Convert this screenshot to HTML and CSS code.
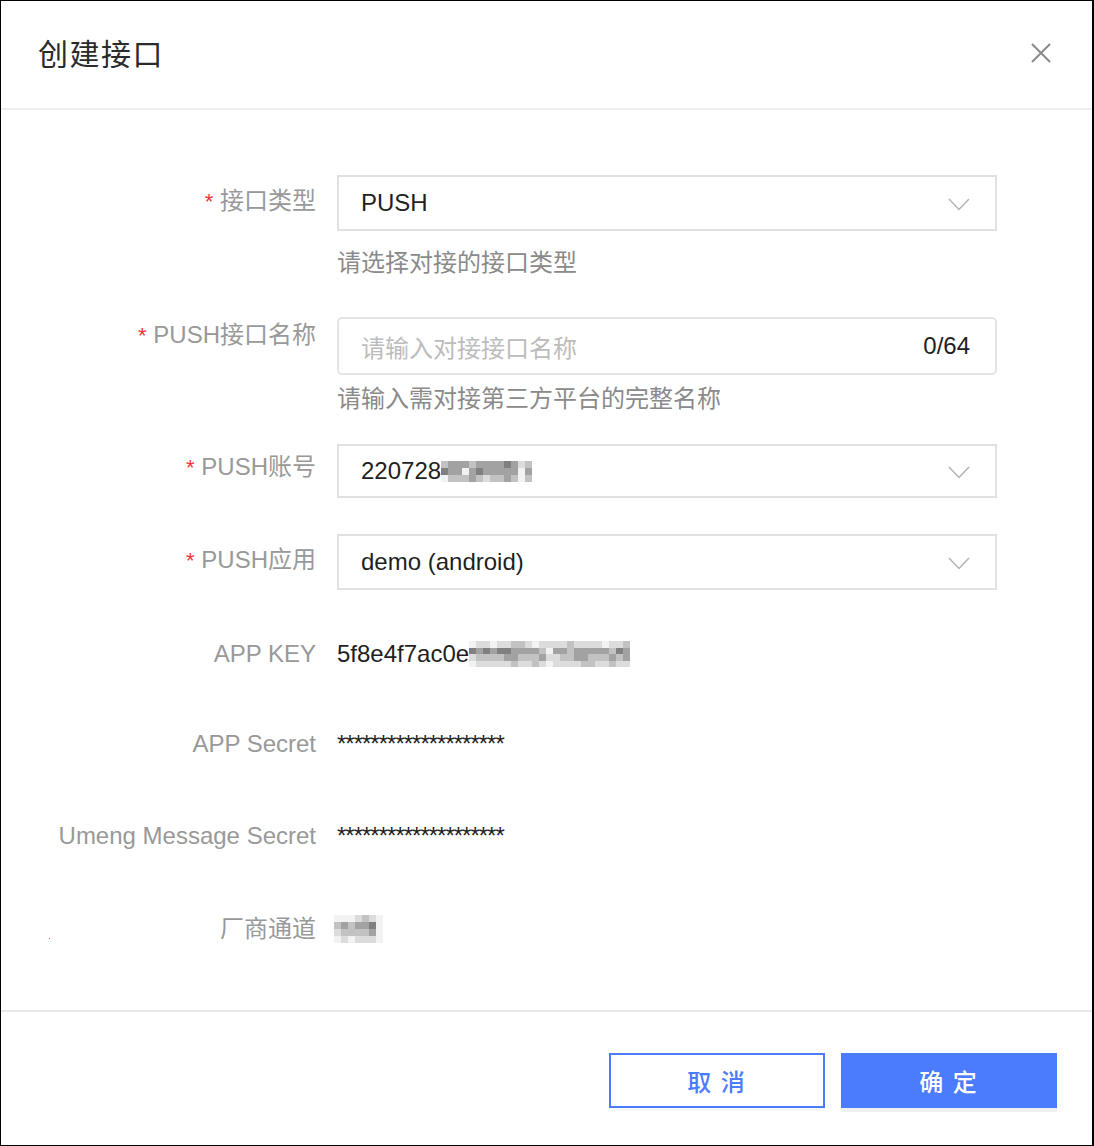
FILE: index.html
```html
<!DOCTYPE html>
<html lang="zh-CN">
<head>
    <meta charset="UTF-8">
    <meta name="viewport" content="width=device-width, initial-scale=1.0">
    <title>创建接口</title>
    <link rel="stylesheet" href="styles.css">
</head>
<body>
    <div class="dialog">
        <!-- Header with title and close button -->
        <div class="dialog-header">
            <h2 class="dialog-title">创建接口</h2>
            <button type="button" class="close-btn" aria-label="关闭">
                <svg width="22" height="22" viewBox="0 0 22 22">
                    <path d="M2 2 L20 20 M20 2 L2 20" stroke="#8a8a8a" stroke-width="2" fill="none"/>
                </svg>
            </button>
        </div>

        <!-- Form body -->
        <div class="dialog-body">
            <form class="form">
                <div class="form-item item-type">
                    <label class="form-label"><span class="required">*</span> 接口类型</label>
                    <div class="form-control">
                        <div class="select">
                            <span class="select-value">PUSH</span>
                            <svg class="arrow" width="22" height="13" viewBox="0 0 22 13">
                                <polyline points="1,1 11,11.5 21,1" stroke="#b3b3b3" stroke-width="1.5" fill="none"/>
                            </svg>
                        </div>
                        <div class="form-help help-type">请选择对接的接口类型</div>
                    </div>
                </div>

                <div class="form-item item-name">
                    <label class="form-label label-name"><span class="required">*</span> PUSH接口名称</label>
                    <div class="form-control">
                        <div class="input">
                            <span class="placeholder">请输入对接接口名称</span>
                            <span class="counter">0/64</span>
                        </div>
                        <div class="form-help help-name">请输入需对接第三方平台的完整名称</div>
                    </div>
                </div>

                <div class="form-item item-account">
                    <label class="form-label label-account"><span class="required">*</span> PUSH账号</label>
                    <div class="form-control">
                        <div class="select select-short">
                            <span class="select-value">220728<span class="mosaic" data-rows="2333233334312|4330343333303|0222321223202"></span></span>
                            <svg class="arrow" width="22" height="13" viewBox="0 0 22 13">
                                <polyline points="1,1 11,11.5 21,1" stroke="#b3b3b3" stroke-width="1.5" fill="none"/>
                            </svg>
                        </div>
                    </div>
                </div>

                <div class="form-item item-app">
                    <label class="form-label"><span class="required">*</span> PUSH应用</label>
                    <div class="form-control">
                        <div class="select">
                            <span class="select-value">demo (android)</span>
                            <svg class="arrow" width="22" height="13" viewBox="0 0 22 13">
                                <polyline points="1,1 11,11.5 21,1" stroke="#b3b3b3" stroke-width="1.5" fill="none"/>
                            </svg>
                        </div>
                    </div>
                </div>

                <div class="form-item text-item item-key">
                    <label class="form-label">APP KEY</label>
                    <div class="form-text">5f8e4f7ac0e<span class="mosaic mosaic-key" data-rows="01101122101111211110112|43434433332033233333243|12222332223112233222323|01111121121011112211211"></span></div>
                </div>

                <div class="form-item text-item item-secret">
                    <label class="form-label">APP Secret</label>
                    <div class="form-text stars">********************</div>
                </div>

                <div class="form-item text-item item-umeng">
                    <label class="form-label">Umeng Message Secret</label>
                    <div class="form-text stars">********************</div>
                </div>

                <div class="form-item text-item item-vendor">
                    <span class="dot"></span>
                    <label class="form-label">厂商通道</label>
                    <div class="form-text"><span class="mosaic mosaic-vendor" data-rows="0001210|2323340|1222230|0101110"></span></div>
                </div>
            </form>
        </div>

        <!-- Footer buttons -->
        <div class="dialog-footer">
            <button type="button" class="btn btn-default">取 消</button>
            <button type="button" class="btn btn-primary">确 定</button>
        </div>
    </div>
    <script src="script.js"></script>
</body>
</html>
```

FILE: styles.css
```css
/* Page */
body {
    margin: 0;
    font-family: "Liberation Sans", "Noto Sans CJK SC", sans-serif;
    background: #fff;
    color: #222;
}

/* Dialog frame */
.dialog {
    width: 1094px;
    height: 1146px;
    box-sizing: border-box;
    border: 1px solid #000;
    border-right-width: 2px;
    display: flex;
    flex-direction: column;
    background: #fff;
}

.dialog-header {
    height: 109px;
    box-sizing: border-box;
    border-bottom: 2px solid #eeeeee;
    padding: 0 40px 0 37px;
    display: flex;
    align-items: center;
    justify-content: space-between;
}

.dialog-title {
    margin: 0 0 6px;
    font-size: 30px;
    font-weight: normal;
    color: #2b2b2b;
    letter-spacing: 1.5px;
}

.close-btn {
    border: none;
    background: none;
    padding: 0;
    width: 22px;
    height: 22px;
    margin-bottom: 4px;
    cursor: pointer;
}

.dialog-body {
    flex: 1;
}

/* Form rows */
.form-item {
    display: flex;
    align-items: flex-start;
    font-size: 24px;
}

.form-label {
    flex: 0 0 336px;
    box-sizing: border-box;
    padding: 10px 21px 0 0;
    text-align: right;
    line-height: 32px;
    color: #999;
    white-space: nowrap;
}

.required {
    color: #f0353b;
    font-size: 22px;
}

.label-name {
    padding-top: 2px;
}

.label-account {
    padding-top: 7px;
}

.form-control {
    width: 660px;
}

.select, .input {
    height: 56px;
    box-sizing: border-box;
    border: 2px solid #e1e1e1;
    display: flex;
    align-items: center;
    justify-content: space-between;
    padding: 0 25px 0 22px;
}

.select-short {
    height: 54px;
}

.select-value {
    color: #1f1f1f;
    display: flex;
    align-items: center;
}

.arrow {
    margin-top: 2px;
}

.input {
    height: 58px;
    border-color: #e4e4e4;
    border-radius: 5px;
}

.placeholder {
    color: #bcbcbc;
}

.counter {
    color: #1f1f1f;
}

.form-help {
    line-height: 32px;
    color: #8a8a8a;
}

.help-type {
    margin-top: 16px;
}

.help-name {
    margin-top: 8px;
}

/* Vertical rhythm */
.item-type { margin-top: 65px; }
.item-name { margin-top: 38px; }
.item-account { margin-top: 29px; }
.item-app { margin-top: 36px; }
.item-key { margin-top: 48px; }
.item-secret { margin-top: 58px; }
.item-umeng { margin-top: 60px; }
.item-vendor { margin-top: 61px; position: relative; }

.text-item .form-label {
    padding-top: 0;
}

.form-text {
    line-height: 32px;
    color: #1f1f1f;
    display: flex;
    align-items: center;
}

.stars {
    letter-spacing: -1px;
}

/* Pixelated (blurred) values */
.mosaic {
    display: inline-flex;
    flex-direction: column;
}

.mosaic-row {
    display: flex;
}

.mosaic-row span {
    width: 7px;
    height: 7px;
}

.mosaic-key .mosaic-row span {
    height: 6.5px;
}

.mosaic-vendor {
    margin-left: -3px;
    margin-top: 2px;
}

.tone-0 { background: #f2f2f2; }
.tone-1 { background: #dcdcdc; }
.tone-2 { background: #c2c2c2; }
.tone-3 { background: #a2a2a2; }
.tone-4 { background: #808080; }

.dot {
    position: absolute;
    left: 48px;
    top: 25px;
    width: 1px;
    height: 1px;
    background: #e44;
}

/* Footer */
.dialog-footer {
    height: 135px;
    box-sizing: border-box;
    border-top: 2px solid #e8e8e8;
    padding: 41px 35px 0 0;
    display: flex;
    justify-content: flex-end;
    gap: 16px;
}

.btn {
    width: 216px;
    height: 55px;
    box-sizing: border-box;
    font-family: "Noto Sans CJK SC", sans-serif;
    font-size: 24px;
    font-weight: 500;
    cursor: pointer;
    letter-spacing: 2px;
}

.btn-default {
    background: #fff;
    color: #4a7cfd;
    border: 2px solid #4a7cfd;
    box-shadow: 0 3px 0 #f7f7f7;
}

.btn-primary {
    background: #4a7cfd;
    color: #fff;
    border: none;
    box-shadow: 0 4px 0 #f0f0f0;
}
```

FILE: script.js
```js
// Build the pixelated blocks from their tone rows
document.querySelectorAll('.mosaic').forEach(function (box) {
    box.dataset.rows.split('|').forEach(function (row) {
        const line = document.createElement('div');
        line.className = 'mosaic-row';
        row.split('').forEach(function (tone) {
            const cell = document.createElement('span');
            cell.className = 'tone-' + tone;
            line.appendChild(cell);
        });
        box.appendChild(line);
    });
});
```
